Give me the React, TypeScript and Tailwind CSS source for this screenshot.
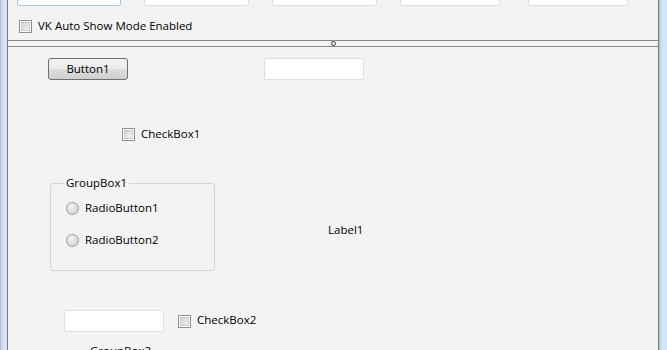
function TextBox({ className = "", focused = false }: { className?: string; focused?: boolean }) {
  return (
    <div
      className={
        "h-[22px] bg-white rounded-[2px] border " +
        (focused ? "border-[#a9cbe9] " : "border-[#dcdee2] ") +
        className
      }
    />
  );
}

function CheckBox({ label, className = "" }: { label: string; className?: string }) {
  return (
    <label className={"flex items-center gap-[6px] h-[13px] leading-[16px] " + className}>
      <span className="w-[13px] h-[13px] shrink-0 border border-[#8f8f8f] bg-white p-px">
        <span className="block w-full h-full border border-[#c8c8c8] bg-[linear-gradient(135deg,#d0d2d5,#f4f4f4)]" />
      </span>
      <span className="-mt-[2px]">{label}</span>
    </label>
  );
}

function Radio({ label }: { label: string }) {
  return (
    <label className="flex items-center gap-[6px] h-[13px] leading-[16px]">
      <span className="w-[13px] h-[13px] shrink-0 rounded-full border border-[#9a9a9a] bg-[radial-gradient(circle_at_40%_35%,#f6f6f6,#c9c9c9)]" />
      <span className="-mt-[2px]">{label}</span>
    </label>
  );
}

export default function App() {
  return (
    <div className="w-[667px] h-[350px] overflow-hidden flex bg-[#f3f3f3] text-black text-[11.5px] font-['Segoe_UI','Open_Sans',sans-serif]">
      {/* window frame left */}
      <div className="w-[7px] shrink-0 bg-[linear-gradient(90deg,#aebdce,#d6e2ef_40%,#dbe6f2)]" />

      <div className="w-[652px] shrink-0 flex flex-col border-x border-[#7b7b7b]">
        {/* top panel */}
        <div className="h-[41px] shrink-0 border-b border-[#8a8a8a] overflow-hidden">
          <div className="flex -mt-[16px] ml-[9px]">
            <TextBox focused className="w-[104px] relative">
              <span className="absolute left-[2px] top-[4px] h-[14px] w-px bg-black" />
              <span className="absolute left-[28px] top-[4px] h-[14px] w-px bg-[#a0a0a0]" />
            </TextBox>
            <TextBox className="w-[105px] ml-[23px]" />
            <TextBox className="w-[105px] ml-[23px]" />
            <TextBox className="w-[100px] ml-[23px]" />
            <TextBox className="w-[100px] ml-[28px]" />
          </div>
          <CheckBox label="VK Auto Show Mode Enabled" className="mt-[14px] ml-[11px]" />
        </div>

        {/* splitter */}
        <div className="h-[5px] shrink-0 flex items-center justify-center">
          <span className="w-[5px] h-[5px] rounded-full border border-[#3c3c3c]" />
        </div>

        {/* lower panel */}
        <div className="flex-1 border-t border-[#8a8a8a] leading-[16px]">
          <div className="flex mt-[11px] ml-[40px]">
            <button className="w-[80px] h-[22px] rounded-[3px] border border-[#707070] bg-[linear-gradient(#f2f2f2,#ebebeb_50%,#dddddd_50%,#cfcfcf)] leading-[18px]">
              Button1
            </button>
            <TextBox className="w-[100px] ml-[136px]" />
          </div>

          <CheckBox label="CheckBox1" className="mt-[48px] ml-[114px]" />

          <div className="flex items-start mt-[34px]">
            <fieldset className="ml-[42px] w-[165px] h-[96px] border border-[#d5d5d5] rounded-[3px]">
              <legend className="ml-[13px] px-[2px]">GroupBox1</legend>
              <div className="flex flex-col gap-[19px] mt-[11px] ml-[15px]">
                <Radio label="RadioButton1" />
                <Radio label="RadioButton2" />
              </div>
            </fieldset>
            <span className="ml-[113px] mt-[47px]">Label1</span>
          </div>

          <div className="flex items-center mt-[39px] ml-[56px]">
            <TextBox className="w-[100px]" />
            <CheckBox label="CheckBox2" className="ml-[14px]" />
          </div>

          <fieldset className="mt-[11px] ml-[66px] w-[165px] h-[96px] border border-[#d5d5d5] rounded-[3px]">
            <legend className="ml-[13px] px-[2px]">GroupBox2</legend>
          </fieldset>
        </div>
      </div>

      {/* window frame right */}
      <div className="flex-1 bg-[linear-gradient(90deg,#9fb8d4,#cfe0f4_25%,#d9e7f6)]" />
    </div>
  );
}
